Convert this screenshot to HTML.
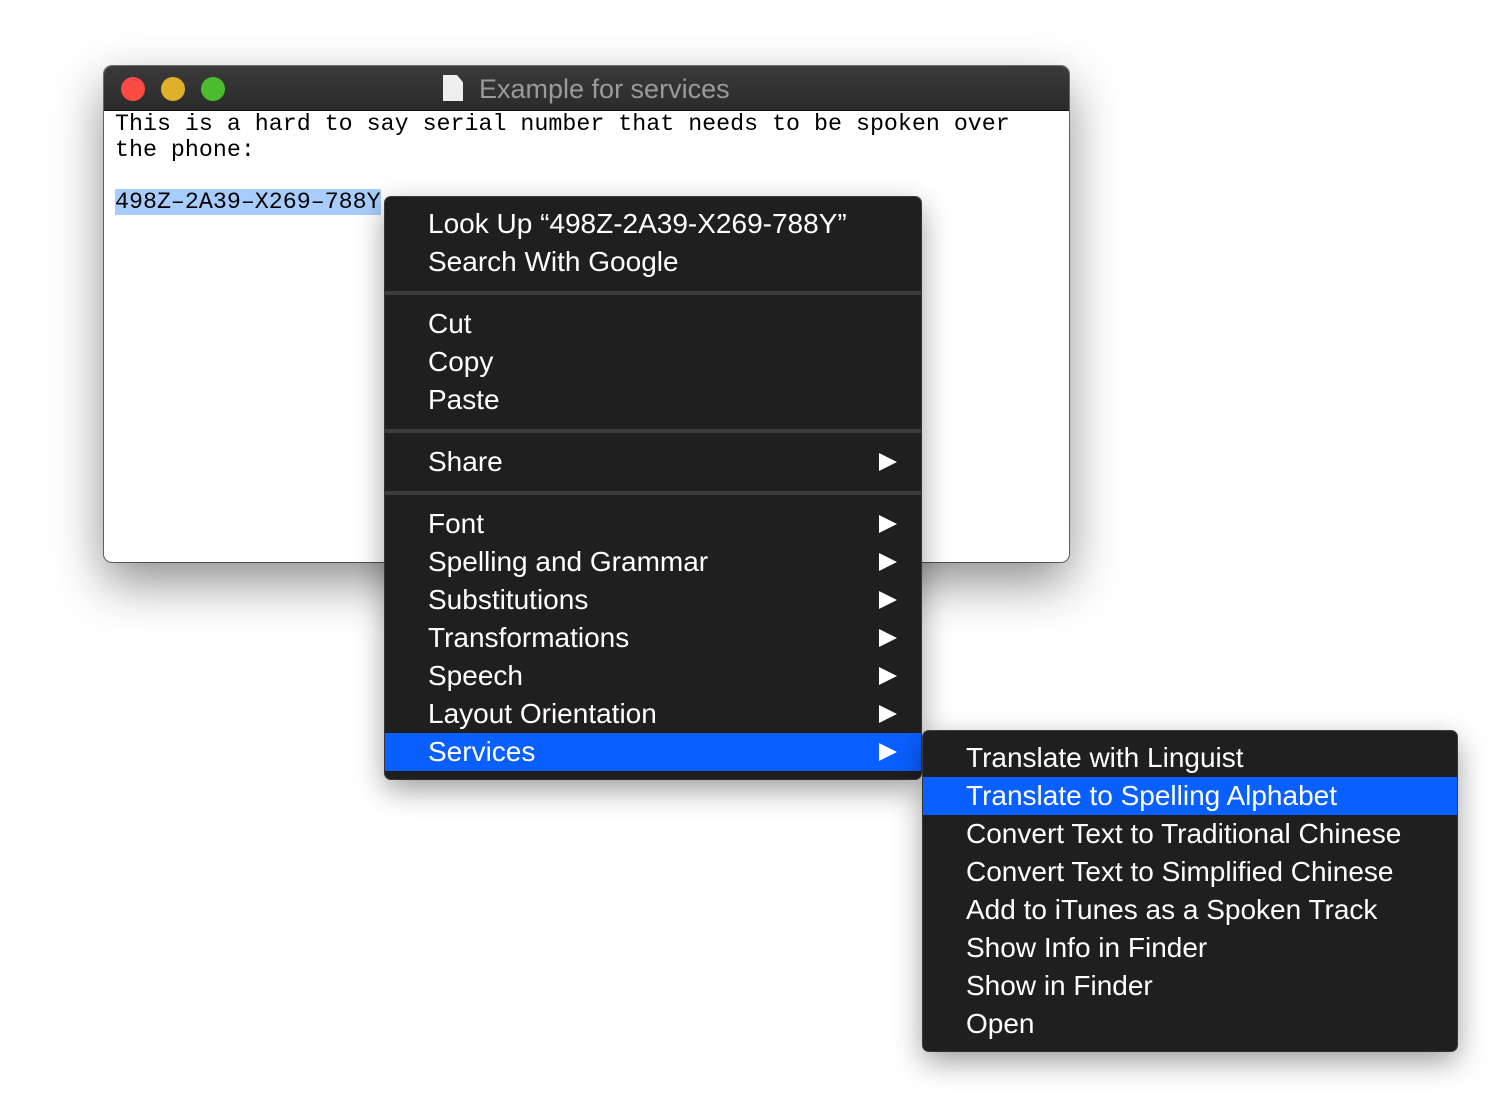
<!DOCTYPE html>
<html><head><style>
body{margin:0;width:1496px;height:1098px;background:#fff;position:relative;overflow:hidden;font-family:"Liberation Sans",sans-serif}
.win{position:absolute;left:104px;top:66px;width:965px;height:496px;border-radius:8px;background:#fff;box-shadow:0 20px 50px rgba(0,0,0,.45),0 0 0 1px #777;overflow:hidden}
.tb{height:44px;background:linear-gradient(#3a3a3a,#2b2b2b);border-bottom:1px solid #111;position:relative}
.dot{position:absolute;top:11px;width:24px;height:24px;border-radius:50%}
.title{position:absolute;left:339px;top:8px;color:#9a9a9a;font-size:27px}
.doc{display:inline-block;width:20px;height:26px;background:#eee;vertical-align:-3px;margin-right:16px;clip-path:polygon(0 0,70% 0,100% 28%,100% 100%,0 100%)}
.txt{position:absolute;left:11px;top:45px;font-family:"Liberation Mono",monospace;font-size:23.3px;line-height:26px;color:#000;white-space:pre}
.sel{background:#a8cdfc}
.menu{position:absolute;background:#1f1f1f;border-radius:6px;box-shadow:0 10px 30px rgba(0,0,0,.4),0 0 0 1px #444;color:#fff;font-size:28px}
.it{height:38px;line-height:38px;padding-left:43px;position:relative}
.it.h{background:#0a5fff}
.ar{position:absolute;right:24px;top:10px;width:0;height:0;border-left:18px solid #fff;border-top:9px solid transparent;border-bottom:9px solid transparent}
.sep{height:4px;background:#3c3c3c;margin:10px 0}
</style></head><body>
<div class="win">
 <div class="tb">
  <div class="dot" style="left:17px;background:#fc4a45"></div>
  <div class="dot" style="left:57px;background:#dfb02a"></div>
  <div class="dot" style="left:97px;background:#4bbc2d"></div>
  <div class="title"><span class="doc"></span>Example for services</div>
 </div>
 <div class="txt">This is a hard to say serial number that needs to be spoken over
the phone:

<span class="sel">498Z–2A39–X269–788Y</span></div>
</div>
<div class="menu" style="left:385px;top:197px;width:536px;height:582px;padding-top:8px;box-sizing:border-box">
 <div class="it">Look Up “498Z-2A39-X269-788Y”</div>
 <div class="it">Search With Google</div>
 <div class="sep"></div>
 <div class="it">Cut</div><div class="it">Copy</div><div class="it">Paste</div>
 <div class="sep"></div>
 <div class="it">Share<span class="ar"></span></div>
 <div class="sep"></div>
 <div class="it">Font<span class="ar"></span></div>
 <div class="it">Spelling and Grammar<span class="ar"></span></div>
 <div class="it">Substitutions<span class="ar"></span></div>
 <div class="it">Transformations<span class="ar"></span></div>
 <div class="it">Speech<span class="ar"></span></div>
 <div class="it">Layout Orientation<span class="ar"></span></div>
 <div class="it h">Services<span class="ar"></span></div>
</div>
<div class="menu" style="left:923px;top:731px;width:534px;height:320px;padding-top:8px;box-sizing:border-box">
 <div class="it">Translate with Linguist</div>
 <div class="it h">Translate to Spelling Alphabet</div>
 <div class="it">Convert Text to Traditional Chinese</div>
 <div class="it">Convert Text to Simplified Chinese</div>
 <div class="it">Add to iTunes as a Spoken Track</div>
 <div class="it">Show Info in Finder</div>
 <div class="it">Show in Finder</div>
 <div class="it">Open</div>
</div>
</body></html>
